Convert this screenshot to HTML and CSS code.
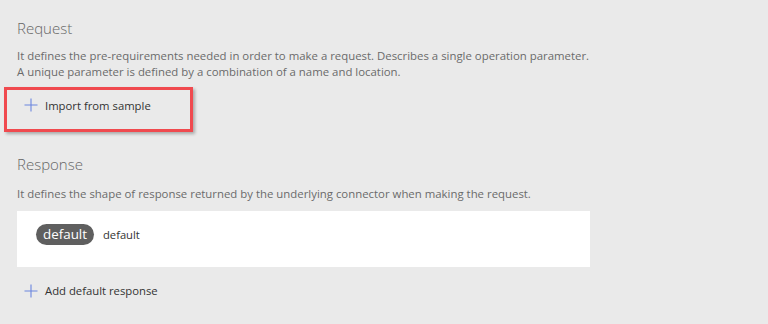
FILE: index.html
```html
<!DOCTYPE html>
<html lang="en">
<head>
<meta charset="utf-8">
<title>Request / Response</title>
<link rel="stylesheet" href="styles.css">
</head>
<body>
<main class="page">
  <section class="section section-request">
    <h2 class="title">Request</h2>
    <p class="desc">It defines the pre-requirements needed in order to make a request. Describes a single operation parameter.<br>A unique parameter is defined by a combination of a name and location.</p>
    <div class="action highlighted">
      <svg class="plus" viewBox="0 0 14 14" width="14" height="14" aria-hidden="true"><path d="M7 0.5V13.5M0.5 7H13.5" /></svg>
      <span>Import from sample</span>
    </div>
  </section>
  <section class="section section-response">
    <h2 class="title">Response</h2>
    <p class="desc">It defines the shape of response returned by the underlying connector when making the request.</p>
    <div class="card">
      <div class="response-row">
        <span class="badge">default</span>
        <span class="response-name">default</span>
      </div>
    </div>
    <div class="action action-add">
      <svg class="plus" viewBox="0 0 14 14" width="14" height="14" aria-hidden="true"><path d="M7 0.5V13.5M0.5 7H13.5" /></svg>
      <span>Add default response</span>
    </div>
  </section>
</main>
</body>
</html>
```

FILE: styles.css
```css
html, body {
  margin: 0;
  padding: 0;
  background: #eaeaea;
}

body {
  width: 768px;
  height: 324px;
  overflow: hidden;
  font-family: "Open Sans", "Noto Sans", "Liberation Sans", sans-serif;
}

.page {
  padding: 18px 0 0 17px;
}

.section {
  display: flex;
  flex-direction: column;
}

.title {
  margin: 0;
  font-size: 15px;
  line-height: 20px;
  font-weight: 300;
  color: #666666;
}

.desc {
  margin: 10px 0 0 0;
  font-size: 11.4px;
  line-height: 15.5px;
  color: #6a6a6a;
}

.action {
  display: flex;
  align-items: center;
  gap: 7px;
  height: 20px;
  padding-left: 7px;
  font-size: 11.3px;
  color: #333333;
  width: max-content;
}

.plus {
  display: block;
  fill: none;
  stroke: #6a85de;
  stroke-width: 1.1;
}

.section-request .action {
  margin-top: 16px;
}

.highlighted {
  position: relative;
}

.highlighted::after {
  content: "";
  position: absolute;
  left: -13px;
  top: -8px;
  width: 183px;
  height: 39px;
  border: 3px solid #f04a4f;
  box-shadow: 2px 2px 3px rgba(0, 0, 0, 0.28);
  pointer-events: none;
}

.section-response {
  margin-top: 39px;
}

.section-response .desc {
  margin-top: 12px;
}

.card {
  margin-top: 9px;
  width: 573px;
  height: 56px;
  box-sizing: border-box;
  background: #ffffff;
  padding: 13px 0 0 19px;
}

.response-row {
  display: flex;
  align-items: center;
  gap: 9px;
}

.badge {
  display: inline-flex;
  align-items: center;
  justify-content: center;
  height: 21px;
  width: 58px;
  box-sizing: border-box;
  border-radius: 11px;
  background: #5f5f5f;
  color: #ffffff;
  font-size: 13.4px;
}

.response-name {
  font-size: 11.2px;
  color: #333333;
}

.action-add {
  margin-top: 14px;
}
```
